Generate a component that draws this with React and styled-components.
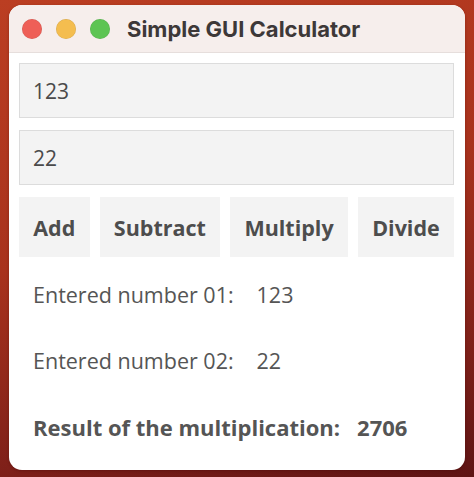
import React from "react";
import styled, { createGlobalStyle } from "styled-components";

const Global = createGlobalStyle`
  html, body { margin: 0; padding: 0; }
  body {
    width: 474px;
    height: 477px;
    overflow: hidden;
    background: linear-gradient(165deg, #bb3e22 0%, #a8321d 45%, #7c1f19 80%, #5e1414 100%);
    font-family: "Open Sans", "Liberation Sans", sans-serif;
  }
`;

const Window = styled.div`
  margin: 5px 9px 0 9px;
  height: 465px;
  background: #ffffff;
  border-radius: 13px;
  overflow: hidden;
  display: flex;
  flex-direction: column;
  box-shadow: 0 1px 3px rgba(60, 10, 5, 0.35);
`;

const TitleBar = styled.div`
  height: 47px;
  flex: none;
  background: #f6eeec;
  border-bottom: 1px solid #e6dedc;
  display: flex;
  align-items: center;
  padding-left: 13px;
  gap: 14px;
`;

const Light = styled.span`
  width: 20px;
  height: 20px;
  border-radius: 50%;
  background: ${(p) => p.$color};
  box-shadow: inset 0 0 0 0.5px rgba(0, 0, 0, 0.12);
  flex: none;
`;

const Title = styled.div`
  margin-left: 3px;
  font-family: Inter, "Open Sans", sans-serif;
  font-weight: 700;
  font-size: 22px;
  color: #3d3838;
  letter-spacing: 0;
`;

const Body = styled.div`
  padding: 10px 11px 0 10px;
  display: flex;
  flex-direction: column;
  gap: 12px;
`;

const Field = styled.div`
  height: 53px;
  background: #f3f3f3;
  border: 1px solid #dcdcdc;
  display: flex;
  align-items: center;
  padding-left: 13px;
  font-size: 21px;
  color: #4a4a4a;
`;

const ButtonRow = styled.div`
  display: flex;
  gap: 10px;
`;

const Button = styled.div`
  flex: 1 1 auto;
  height: 60px;
  background: #f3f3f3;
  display: flex;
  align-items: center;
  justify-content: center;
  padding: 0 12px;
  font-size: 21.5px;
  font-weight: 700;
  color: #4d4d4d;
  white-space: nowrap;
`;

const Results = styled.div`
  display: flex;
  flex-direction: column;
  padding-left: 24px;
  padding-top: 25px;
  gap: 41px;
`;

const Line = styled.div`
  display: flex;
  align-items: center;
  height: 25px;
  gap: ${(p) => (p.$bold ? "17px" : "23px")};
  font-size: ${(p) => (p.$bold ? "22px" : "21.5px")};
  font-weight: ${(p) => (p.$bold ? 700 : 400)};
  color: #555555;
  white-space: nowrap;
`;

export default function App() {
  return (
    <>
      <Global />
      <Window>
        <TitleBar>
          <Light $color="#ee5f57" />
          <Light $color="#f4bd4f" />
          <Light $color="#5dc453" />
          <Title>Simple GUI Calculator</Title>
        </TitleBar>
        <Body>
          <Field>123</Field>
          <Field>22</Field>
          <ButtonRow>
            <Button>Add</Button>
            <Button>Subtract</Button>
            <Button>Multiply</Button>
            <Button>Divide</Button>
          </ButtonRow>
        </Body>
        <Results>
          <Line>
            <span>Entered number 01:</span>
            <span>123</span>
          </Line>
          <Line>
            <span>Entered number 02:</span>
            <span>22</span>
          </Line>
          <Line $bold>
            <span>Result of the multiplication:</span>
            <span>2706</span>
          </Line>
        </Results>
      </Window>
    </>
  );
}
